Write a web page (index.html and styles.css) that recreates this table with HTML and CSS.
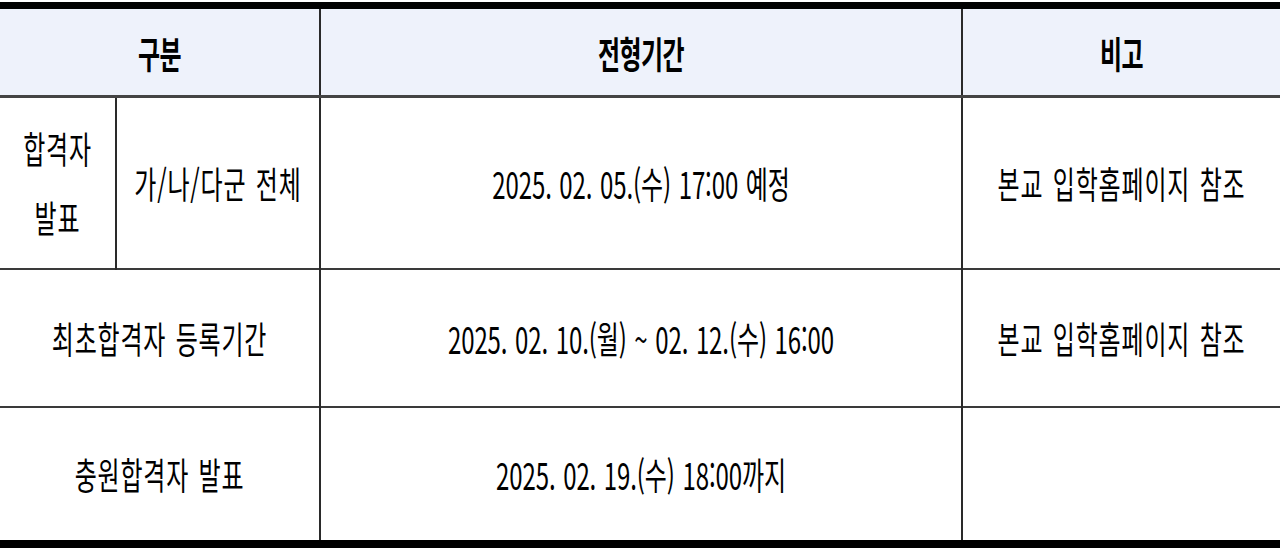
FILE: index.html
```html
<!DOCTYPE html>
<html lang="ko">
<head>
<meta charset="utf-8">
<link rel="stylesheet" href="styles.css">
</head>
<body>
<div class="wrap">
<table class="sched">
  <colgroup>
    <col class="c1a"><col class="c1b"><col class="c2"><col class="c3">
  </colgroup>
  <thead>
    <tr class="head">
      <th colspan="2"><span class="t">구분</span></th>
      <th><span class="t">전형기간</span></th>
      <th><span class="t">비고</span></th>
    </tr>
  </thead>
  <tbody>
    <tr class="r1">
      <td class="sub"><span class="t txt two">합격자<br>발표</span></td>
      <td class="sub2"><span class="t txt">가/나/다군 전체</span></td>
      <td><span class="t date">2025. 02. 05.(수) 17:00 예정</span></td>
      <td><span class="t txt">본교 입학홈페이지 참조</span></td>
    </tr>
    <tr class="r2">
      <td colspan="2"><span class="t txt">최초합격자 등록기간</span></td>
      <td><span class="t date">2025. 02. 10.(월) ~ 02. 12.(수) 16:00</span></td>
      <td><span class="t txt">본교 입학홈페이지 참조</span></td>
    </tr>
    <tr class="r3">
      <td colspan="2"><span class="t txt">충원합격자 발표</span></td>
      <td><span class="t date">2025. 02. 19.(수) 18:00까지</span></td>
      <td></td>
    </tr>
  </tbody>
</table>
</div>
</body>
</html>
```

FILE: styles.css
```css
html, body {
  margin: 0;
  padding: 0;
  background: #ffffff;
}
.wrap {
  padding-top: 2px;
  width: 1280px;
}
.sched {
  width: 1280px;
  border-collapse: collapse;
  table-layout: fixed;
  font-family: "Liberation Sans Narrow", "Noto Sans CJK KR", "Noto Sans", sans-serif;
  font-size: 24px;
  color: #000;
  border-top: 7px solid #000;
  border-bottom: 8px solid #000;
}
.c1a { width: 116px; }
.c1b { width: 204px; }
.c2 { width: 642px; }
.c3 { width: 318px; }
th, td {
  padding: 0;
  text-align: center;
  vertical-align: middle;
  border-left: 2px solid #2a2a2a;
  border-top: 2px solid #3a3a3a;
}
th:first-child, td:first-child {
  border-left: none;
}
.head th {
  background: #eef2fb;
  height: 86px;
  font-weight: bold;
  border-top: none;
  border-bottom: 3px solid #444;
}
.r1 td { height: 170px; }
.r2 td { height: 136px; }
.r3 td { height: 132px; }
.t {
  display: inline-block;
  transform: scaleY(1.55);
  letter-spacing: -0.6px;
  word-spacing: 2px;
  line-height: 1;
  white-space: nowrap;
}
.txt {
  letter-spacing: 0.8px;
  word-spacing: 2px;
}
.date {
  letter-spacing: -0.1px;
  word-spacing: 1px;
}
.two {
  line-height: 44px;
}
```
